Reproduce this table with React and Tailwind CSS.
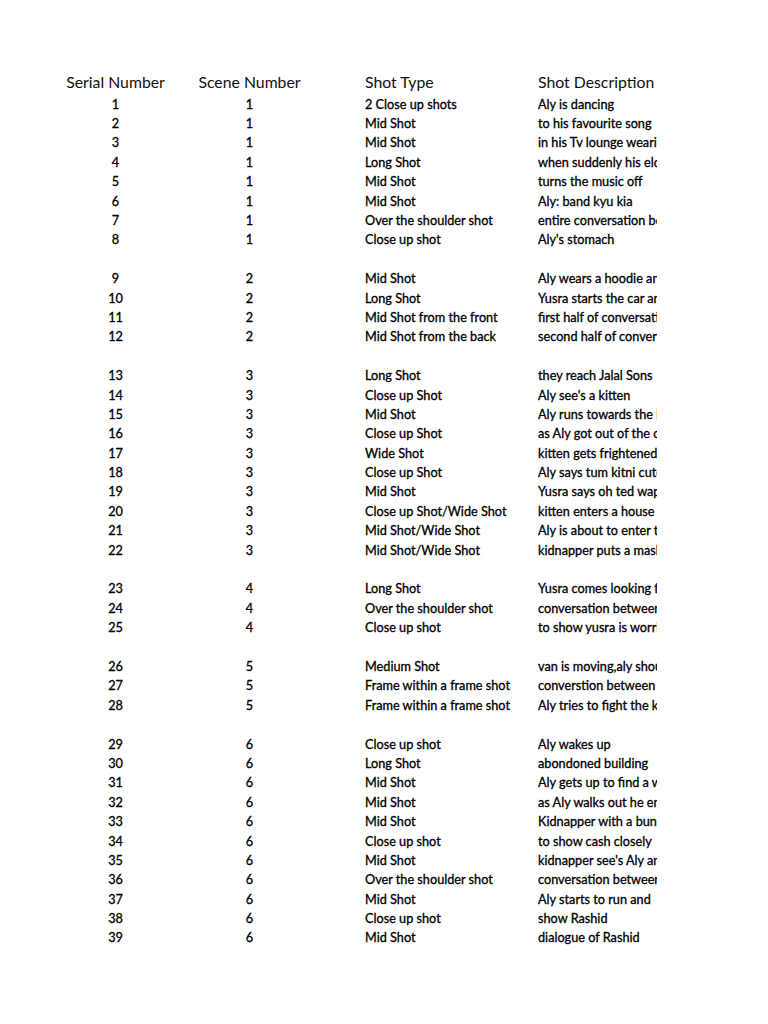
import React from 'react';

const groups = [
  [
    [1, 1, '2 Close up shots', 'Aly is dancing'],
    [2, 1, 'Mid Shot', 'to his favourite song'],
    [3, 1, 'Mid Shot', 'in his Tv lounge wearing shorts'],
    [4, 1, 'Long Shot', 'when suddenly his elder sister'],
    [5, 1, 'Mid Shot', 'turns the music off'],
    [6, 1, 'Mid Shot', 'Aly: band kyu kia'],
    [7, 1, 'Over the shoulder shot', 'entire conversation between'],
    [8, 1, 'Close up shot', "Aly's stomach"],
  ],
  [
    [9, 2, 'Mid Shot', 'Aly wears a hoodie and'],
    [10, 2, 'Long Shot', 'Yusra starts the car and'],
    [11, 2, 'Mid Shot from the front', 'first half of conversation'],
    [12, 2, 'Mid Shot from the back', 'second half of conversation'],
  ],
  [
    [13, 3, 'Long Shot', 'they reach Jalal Sons'],
    [14, 3, 'Close up Shot', "Aly see's a kitten"],
    [15, 3, 'Mid Shot', 'Aly runs towards the kitten'],
    [16, 3, 'Close up Shot', 'as Aly got out of the car'],
    [17, 3, 'Wide Shot', 'kitten gets frightened'],
    [18, 3, 'Close up Shot', 'Aly says tum kitni cute ho'],
    [19, 3, 'Mid Shot', 'Yusra says oh ted wapis aao'],
    [20, 3, 'Close up Shot/Wide Shot', 'kitten enters a house'],
    [21, 3, 'Mid Shot/Wide Shot', 'Aly is about to enter the house'],
    [22, 3, 'Mid Shot/Wide Shot', 'kidnapper puts a mask on'],
  ],
  [
    [23, 4, 'Long Shot', 'Yusra comes looking for Aly'],
    [24, 4, 'Over the shoulder shot', 'conversation between'],
    [25, 4, 'Close up shot', 'to show yusra is worried'],
  ],
  [
    [26, 5, 'Medium Shot', 'van is moving,aly shouts'],
    [27, 5, 'Frame within a frame shot', 'converstion between'],
    [28, 5, 'Frame within a frame shot', 'Aly tries to fight the kidnapper'],
  ],
  [
    [29, 6, 'Close up shot', 'Aly wakes up'],
    [30, 6, 'Long Shot', 'abondoned building'],
    [31, 6, 'Mid Shot', 'Aly gets up to find a way out'],
    [32, 6, 'Mid Shot', 'as Aly walks out he encounters'],
    [33, 6, 'Mid Shot', 'Kidnapper with a bunch of cash'],
    [34, 6, 'Close up shot', 'to show cash closely'],
    [35, 6, 'Mid Shot', "kidnapper see's Aly and"],
    [36, 6, 'Over the shoulder shot', 'conversation between'],
    [37, 6, 'Mid Shot', 'Aly starts to run and'],
    [38, 6, 'Close up shot', 'show Rashid'],
    [39, 6, 'Mid Shot', 'dialogue of Rashid'],
  ],
];

function Row({ serial, scene, type, desc }) {
  return (
    <div className="flex h-[19.4px] items-center text-[12.7px] text-black [-webkit-text-stroke:0.3px_black]">
      <div className="w-[101px] text-center">{serial}</div>
      <div className="ml-[31px] w-[105px] text-center">{scene}</div>
      <div className="ml-[63px] w-[173px] whitespace-nowrap">{type}</div>
      <div className="w-[119px] overflow-hidden whitespace-nowrap">{desc}</div>
    </div>
  );
}

export default function App() {
  return (
    <div
      className="min-h-[1024px] w-[768px] bg-white pl-[65px] pt-[70px]"
      style={{ fontFamily: 'Lato, "Open Sans", sans-serif' }}
    >
      {/* header row */}
      <div className="flex h-[24.5px] items-center text-[15.8px] text-[#111]">
        <div className="w-[101px] whitespace-nowrap text-center">Serial Number</div>
        <div className="ml-[31px] w-[105px] whitespace-nowrap text-center">Scene Number</div>
        <div className="ml-[63px] w-[173px]">Shot Type</div>
        <div className="w-[119px] overflow-hidden whitespace-nowrap">Shot Description</div>
      </div>

      {groups.map((rows, gi) => (
        <div key={gi}>
          {gi > 0 && <div className="h-[19.4px]" />}
          {rows.map(([serial, scene, type, desc]) => (
            <Row key={serial} serial={serial} scene={scene} type={type} desc={desc} />
          ))}
        </div>
      ))}
    </div>
  );
}
